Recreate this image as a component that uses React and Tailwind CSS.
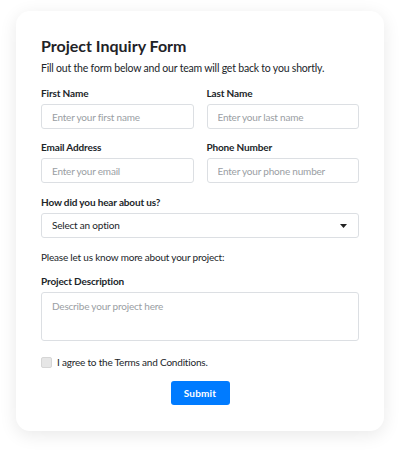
import React from "react";

const FONT = { fontFamily: 'Lato, "Noto Sans", sans-serif' };

function Field({ label, placeholder }) {
  return (
    <div className="flex flex-col">
      <label className="text-[10px] leading-[14px] font-bold tracking-[-0.15px] text-[#212529]">{label}</label>
      <input
        placeholder={placeholder}
        className="mt-[4px] h-[25px] w-full rounded-[3px] border border-[#dcdfe3] bg-white px-[10px] text-[10px] tracking-[-0.2px] text-[#212529] placeholder:text-[#9a9ea3] outline-none"
      />
    </div>
  );
}

export default function App() {
  return (
    <div className="min-h-[451px] w-[400px] bg-white pt-[11px]" style={FONT}>
      <div className="mx-[16px] rounded-[14px] bg-white px-[25px] pt-[25px] pb-[26px] shadow-[0_4px_18px_rgba(0,0,0,0.09)]">
        <h1 className="text-[16px] leading-[20px] font-bold text-[#1f2327]">Project Inquiry Form</h1>
        <p className="mt-[4px] text-[10.5px] leading-[16px] tracking-[-0.2px] text-[#212529]">
          Fill out the form below and our team will get back to you shortly.
        </p>

        <div className="mt-[10px] grid grid-cols-2 gap-x-[13px] gap-y-[11px]">
          <Field label="First Name" placeholder="Enter your first name" />
          <Field label="Last Name" placeholder="Enter your last name" />
          <Field label="Email Address" placeholder="Enter your email" />
          <Field label="Phone Number" placeholder="Enter your phone number" />
        </div>

        <div className="mt-[12px] flex flex-col">
          <label className="text-[10px] leading-[14px] font-bold tracking-[-0.15px] text-[#212529]">How did you hear about us?</label>
          <div className="mt-[4px] flex h-[25px] items-center justify-between rounded-[3px] border border-[#dcdfe3] bg-white px-[10px]">
            <span className="text-[10px] tracking-[-0.2px] text-[#212529]">Select an option</span>
            <svg width="7" height="4" viewBox="0 0 7 4" className="mr-[1px]">
              <path d="M0 0 L7 0 L3.5 4 Z" fill="#222" />
            </svg>
          </div>
        </div>

        <p className="mt-[12px] text-[10px] leading-[14px] tracking-[-0.2px] text-[#212529]">Please let us know more about your project:</p>

        <div className="mt-[10px] flex flex-col">
          <label className="text-[10px] leading-[14px] font-bold tracking-[-0.15px] text-[#212529]">Project Description</label>
          <textarea
            placeholder="Describe your project here"
            className="mt-[4px] h-[49px] w-full resize-none rounded-[3px] border border-[#dcdfe3] bg-white px-[10px] py-[6px] text-[10px] leading-[14px] tracking-[-0.2px] text-[#212529] placeholder:text-[#9a9ea3] outline-none"
          />
        </div>

        <label className="mt-[14px] flex items-center gap-[5px]">
          <span className="h-[11px] w-[11px] rounded-[2px] border border-[#d6d6d6] bg-[#e6e6e6]" />
          <span className="text-[10px] leading-[14px] tracking-[-0.2px] text-[#212529]">I agree to the Terms and Conditions.</span>
        </label>

        <div className="mt-[12px] flex justify-center">
          <button className="h-[24px] w-[59px] rounded-[3px] bg-[#007bff] text-[10px] font-bold tracking-[0.2px] text-white">
            Submit
          </button>
        </div>
      </div>
    </div>
  );
}
